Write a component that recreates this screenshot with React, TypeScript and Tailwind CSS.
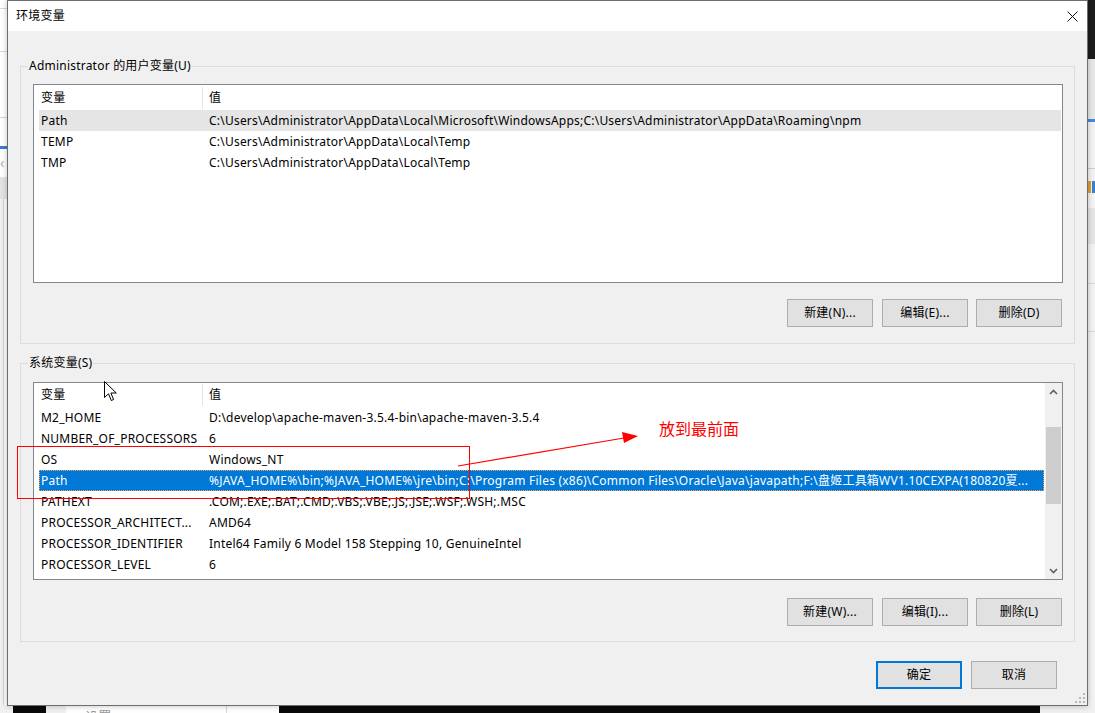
import React from 'react';

const userVars = [
  { name: 'Path', value: String.raw`C:\Users\Administrator\AppData\Local\Microsoft\WindowsApps;C:\Users\Administrator\AppData\Roaming\npm` },
  { name: 'TEMP', value: String.raw`C:\Users\Administrator\AppData\Local\Temp` },
  { name: 'TMP', value: String.raw`C:\Users\Administrator\AppData\Local\Temp` },
];

const sysVars = [
  { name: 'M2_HOME', value: String.raw`D:\develop\apache-maven-3.5.4-bin\apache-maven-3.5.4` },
  { name: 'NUMBER_OF_PROCESSORS', value: '6' },
  { name: 'OS', value: 'Windows_NT' },
  { name: 'Path', value: String.raw`%JAVA_HOME%\bin;%JAVA_HOME%\jre\bin;C:\Program Files (x86)\Common Files\Oracle\Java\javapath;F:\盘姬工具箱WV1.10CEXPA(180820夏...` },
  { name: 'PATHEXT', value: '.COM;.EXE;.BAT;.CMD;.VBS;.VBE;.JS;.JSE;.WSF;.WSH;.MSC' },
  { name: 'PROCESSOR_ARCHITECT...', value: 'AMD64' },
  { name: 'PROCESSOR_IDENTIFIER', value: 'Intel64 Family 6 Model 158 Stepping 10, GenuineIntel' },
  { name: 'PROCESSOR_LEVEL', value: '6' },
];

const Button: React.FC<{ label: string; primary?: boolean }> = ({ label, primary }) => (
  <button
    className={`w-[86px] h-[28px] bg-[#e1e1e1] flex items-center justify-center text-[12px] leading-none ${
      primary ? 'border-2 border-[#0078d7]' : 'border border-[#adadad]'
    }`}
  >
    {label}
  </button>
);

const ListHeader: React.FC<{ h: number }> = ({ h }) => (
  <div className={`flex items-center bg-white shrink-0 ${h === 25 ? 'h-[25px]' : 'h-[24px]'}`}>
    <div className="w-[163px] pl-[2px]">变量</div>
    <div className="w-px h-[22px] bg-[#e5e5e5]" />
    <div className="w-[4px]" />
    <div className="pl-[2px] flex-1">值</div>
  </div>
);

const Row: React.FC<{ name: string; value: string; state?: 'hover' | 'selected' }> = ({ name, value, state }) => (
  <div
    className={`flex h-[21px] items-center whitespace-nowrap overflow-hidden shrink-0 ${
      state === 'hover' ? 'bg-[#e5e5e5]' : ''
    } ${state === 'selected' ? 'bg-[#0078d7] text-white outline-1 outline-dotted outline-[#f0a050] -outline-offset-1' : ''}`}
  >
    <div className="w-[168px] pl-[2px] shrink-0 overflow-hidden">{name}</div>
    <div className="pl-[2px] flex-1 overflow-hidden">{value}</div>
  </div>
);

const Chevron: React.FC<{ up?: boolean }> = ({ up }) => (
  <svg width="9" height="6" viewBox="0 0 9 6">
    <path d={up ? 'M1 5 L4.5 1.5 L8 5' : 'M1 1 L4.5 4.5 L8 1'} fill="none" stroke="#606060" strokeWidth="1.6" />
  </svg>
);

const Scrollbar = () => (
  <div className="w-[17px] bg-[#f0f0f0] flex flex-col shrink-0">
    <div className="h-[17px] flex items-center justify-center">
      <Chevron up />
    </div>
    <div className="h-[27px]" />
    <div className="h-[77px] bg-[#cdcdcd] mx-px" />
    <div className="flex-1" />
    <div className="h-[17px] flex items-center justify-center">
      <Chevron />
    </div>
  </div>
);

const GroupLabel: React.FC<{ text: string }> = ({ text }) => (
  <div className="-mt-[9px] ml-[7px] px-px w-fit h-[16px] leading-[16px] bg-[#f0f0f0]">{text}</div>
);

export default function App() {
  return (
    <div className="relative w-[1095px] h-[713px] overflow-hidden bg-[#f0f0f0] text-[12px] tracking-[0.22px] text-black font-['Noto_Sans','Noto_Sans_CJK_SC',sans-serif]">
      {/* backdrop: windows behind the dialog */}
      <div className="absolute left-0 top-0 w-[7px] h-[713px] bg-white flex flex-col">
        <div className="h-[9px] border-b border-[#d9d9d9]" />
        <div className="h-[43px] border-b border-[#d9d9d9]" />
        <div className="h-[66px] border-b border-[#d9d9d9]" />
        <div className="h-[28px]" />
        <div className="h-[3px] bg-[#3a7bd5]" />
        <div className="h-[28px] flex items-center text-[#b0b0b0] text-[14px] leading-none">‹</div>
        <div className="h-[22px] bg-[#e3e3e3]" />
        <div className="flex-1 bg-[#f0f0f0] border-l-[3px] border-[#f0f0f0] flex">
          <div className="w-px bg-[#d0d0d0]" />
          <div className="flex-1 bg-white" />
        </div>
      </div>
      <div className="absolute right-0 top-0 w-[8px] h-[713px] bg-[#f3f3f3] flex flex-col">
        <div className="h-[59px] bg-[#1c1c1c]" />
        <div className="h-[60px] bg-[#e8e8e8]" />
        <div className="h-[3px] bg-[#4a88d8]" />
        <div className="h-[47px] border-b border-[#d0d0d0]" />
        <div className="h-[12px] mt-[12px] flex gap-px pl-px">
          <div className="w-[3px] bg-[#e0a030]" />
          <div className="w-[3px] bg-[#3a80d0]" />
        </div>
        <div className="h-[15px]" />
        <div className="h-[36px] bg-[#e5e5e5]" />
        <div className="h-[40px] border-b border-[#d8d8d8]" />
        <div className="h-[48px] border-b border-[#d8d8d8]" />
        <div className="flex-1" />
      </div>
      <div className="absolute left-0 top-[705px] w-[1095px] h-[8px] flex">
        <div className="w-[13px] bg-[#f0f0f0]" />
        <div className="w-[33px] bg-[#0a0a0a]" />
        <div className="w-[20px] bg-[#f0f0f0]" />
        <div className="w-[161px] bg-white border-r border-[#d8d8d8] pl-[19px] text-[#9a9a9a] text-[13px] leading-[22px] overflow-hidden">设置</div>
        <div className="w-[52px] bg-white" />
        <div className="w-[761px] bg-[#0a0a0a]" />
        <div className="flex-1 bg-[#f0f0f0]" />
      </div>

      {/* dialog */}
      <div className="absolute left-[7px] top-0 w-[1081px] h-[706px] border border-[#6e6e6e] bg-[#f0f0f0] flex flex-col shadow-[0_0_6px_rgba(0,0,0,0.25)]">
        <div className="h-[30px] bg-white flex items-center justify-between shrink-0">
          <span className="pl-[8px] leading-none">环境变量</span>
          <svg width="11" height="11" viewBox="0 0 11 11" className="mr-[9px]">
            <path d="M0.5 0.5 L10.5 10.5 M10.5 0.5 L0.5 10.5" stroke="#111" strokeWidth="1" />
          </svg>
        </div>

        <div className="flex-1 flex flex-col px-[12px] relative">
          {/* user variables */}
          <div className="mt-[35px] h-[278px] border border-[#dcdcdc] flex flex-col">
            <GroupLabel text="Administrator 的用户变量(U)" />
            <div className="mt-[10px] ml-[12px] mr-[11px] h-[199px] border border-[#828790] bg-white flex flex-col pl-[5px] pr-px">
              <ListHeader h={25} />
              {userVars.map((v, i) => (
                <Row key={v.name} name={v.name} value={v.value} state={i === 0 ? 'hover' : undefined} />
              ))}
            </div>
            <div className="mt-[16px] mr-[12px] flex justify-end gap-[9px]">
              <Button label="新建(N)..." />
              <Button label="编辑(E)..." />
              <div className="-ml-px">
                <Button label="删除(D)" />
              </div>
            </div>
          </div>

          {/* system variables */}
          <div className="mt-[19px] h-[279px] border border-[#dcdcdc] flex flex-col">
            <GroupLabel text="系统变量(S)" />
            <div className="mt-[11px] ml-[12px] mr-[11px] h-[198px] border border-[#828790] bg-white flex">
              <div className="flex-1 flex flex-col pl-[5px] pr-px overflow-hidden">
                <ListHeader h={24} />
                {sysVars.map((v) => (
                  <Row key={v.name} name={v.name} value={v.value} state={v.name === 'Path' ? 'selected' : undefined} />
                ))}
              </div>
              <Scrollbar />
            </div>
            <div className="mt-[18px] mr-[12px] flex justify-end gap-[9px]">
              <Button label="新建(W)..." />
              <Button label="编辑(I)..." />
              <div className="-ml-px">
                <Button label="删除(L)" />
              </div>
            </div>
          </div>

          <div className="mt-[19px] mr-[18px] flex justify-end gap-[9px]">
            <Button label="确定" primary />
            <Button label="取消" />
          </div>

          {/* resize grip */}
          <svg width="11" height="11" viewBox="0 0 11 11" className="absolute right-[2px] bottom-[2px]">
            {[
              [9, 1], [9, 5], [5, 5], [9, 9], [5, 9], [1, 9],
            ].map(([x, y]) => (
              <rect key={`${x}-${y}`} x={x} y={y} width="2" height="2" fill="#b8b8b8" />
            ))}
          </svg>
        </div>
      </div>

      {/* annotation overlay */}
      <div className="absolute left-[17px] top-[446px] w-[453px] h-[53px] border border-[#ff0000] pointer-events-none" />
      <svg className="absolute left-0 top-0 pointer-events-none" width="1095" height="713">
        <line x1="458" y1="466" x2="624" y2="438" stroke="#ff0000" strokeWidth="1.2" />
        <polygon points="638,436 622,432 624,443" fill="#ff0000" />
      </svg>
      <div className="absolute left-[659px] top-[418px] text-[16px] leading-[20px] tracking-normal text-[#ff0000] font-['Noto_Sans_CJK_SC',sans-serif]">
        放到最前面
      </div>

      {/* mouse cursor */}
      <svg className="absolute left-[104px] top-[381px] pointer-events-none" width="14" height="21" viewBox="0 0 14 21">
        <path d="M0.5 0.5 L0.5 16.5 L4.5 12.8 L7.3 19.5 L9.6 18.5 L6.9 12 L12.3 12 Z" fill="#fff" stroke="#000" strokeWidth="1" strokeLinejoin="round" />
      </svg>
    </div>
  );
}
